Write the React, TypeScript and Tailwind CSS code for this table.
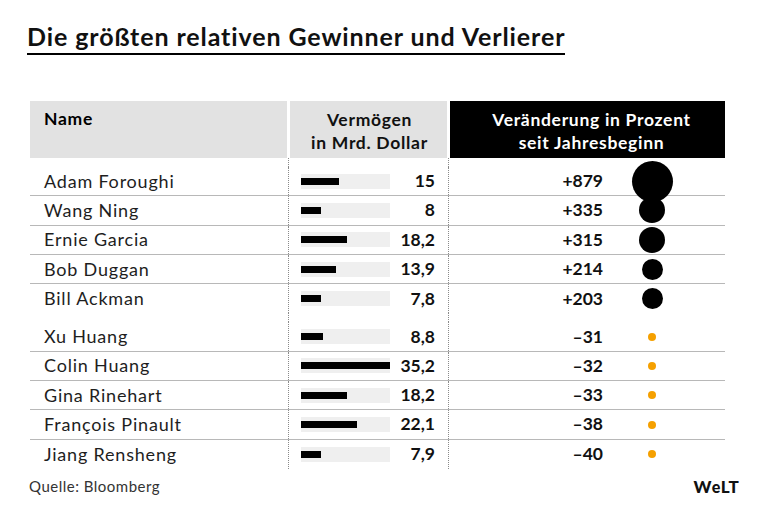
import React from "react";

type Row = { name: string; value: number; label: string; pct: string; d: number; win: boolean };

const winners: Row[] = [
  { name: "Adam Foroughi", value: 15, label: "15", pct: "+879", d: 41, win: true },
  { name: "Wang Ning", value: 8, label: "8", pct: "+335", d: 26, win: true },
  { name: "Ernie Garcia", value: 18.2, label: "18,2", pct: "+315", d: 26, win: true },
  { name: "Bob Duggan", value: 13.9, label: "13,9", pct: "+214", d: 21, win: true },
  { name: "Bill Ackman", value: 7.8, label: "7,8", pct: "+203", d: 21, win: true },
];

const losers: Row[] = [
  { name: "Xu Huang", value: 8.8, label: "8,8", pct: "–31", d: 8, win: false },
  { name: "Colin Huang", value: 35.2, label: "35,2", pct: "–32", d: 8, win: false },
  { name: "Gina Rinehart", value: 18.2, label: "18,2", pct: "–33", d: 8, win: false },
  { name: "François Pinault", value: 22.1, label: "22,1", pct: "–38", d: 8, win: false },
  { name: "Jiang Rensheng", value: 7.9, label: "7,9", pct: "–40", d: 8, win: false },
];

function DataRow({ r, last }: { r: Row; last: boolean }) {
  return (
    <div className={`flex h-[29.3px] ${last ? "" : "border-b-[1.5px] border-[#b8b8b8]"}`}>
      <div className="w-[258px] flex items-center pl-[14px] text-[18px] text-[#1e1e1e] tracking-[0.8px]">
        {r.name}
      </div>
      <div className="w-[161px] flex items-center border-x border-dotted border-[#8a8a8a] pl-[12px] pr-[13px]">
        <div className="w-[89px] h-[15px] bg-[#efefef] flex items-center">
          <div className="h-[7px] bg-black" style={{ width: `${(r.value / 35.2) * 89}px` }} />
        </div>
        <div className="flex-1 text-right text-[17.5px] font-bold text-[#111]">{r.label}</div>
      </div>
      <div className="flex items-center">
        <div className="w-[154px] text-right text-[17.5px] font-bold text-[#111]">{r.pct}</div>
        <div className="w-[98px] h-[29px] flex items-center justify-center">
          <div
            className={`shrink-0 rounded-full ${r.win ? "bg-black" : "bg-[#f5a000]"}`}
            style={{ width: `${r.d}px`, height: `${r.d}px` }}
          />
        </div>
      </div>
    </div>
  );
}

function Spacer({ h }: { h: string }) {
  return (
    <div className={`flex ${h}`}>
      <div className="w-[258px]" />
      <div className="w-[161px] border-x border-dotted border-[#8a8a8a]" />
    </div>
  );
}

export default function App() {
  return (
    <div className="w-[768px] h-[512px] bg-white overflow-hidden font-['Lato',sans-serif] text-black">
      <div className="pl-[27px] pt-[20px]">
        <div className="inline-block text-[25px] leading-[32px] font-bold tracking-[0.9px] border-b-[2.5px] border-black pb-[1px] text-[#111]">
          Die größten relativen Gewinner und Verlierer
        </div>
      </div>
      <div className="ml-[30px] w-[695px] mt-[46px]">
        <div className="flex h-[57px] text-[17.5px] font-bold leading-[23px] tracking-[0.7px]">
          <div className="w-[257px] bg-[#e2e2e2] pl-[14px] pt-[6px]">Name</div>
          <div className="w-[157px] ml-[3px] bg-[#e2e2e2] flex flex-col items-center pt-[7px] pl-[2px] text-[#111]">
            <span>Vermögen</span>
            <span>in Mrd. Dollar</span>
          </div>
          <div className="w-[275px] ml-[3px] bg-black text-white flex flex-col items-center pt-[7px] pl-[8px]">
            <span>Veränderung in Prozent</span>
            <span>seit Jahresbeginn</span>
          </div>
        </div>
        <Spacer h="h-[9px]" />
        {winners.map((r, i) => (
          <DataRow key={r.name} r={r} last={i === winners.length - 1} />
        ))}
        <Spacer h="h-[9px]" />
        {losers.map((r, i) => (
          <DataRow key={r.name} r={r} last={i === losers.length - 1} />
        ))}
      </div>
      <div className="flex items-center justify-between ml-[29px] mr-[29px] mt-[5px]">
        <span className="text-[15px] tracking-[0.5px] text-[#333]">Quelle: Bloomberg</span>
        <span className="text-[17px] font-black tracking-[0.3px] text-[#111]">
          W<span className="text-[16px]">e</span>LT
        </span>
      </div>
    </div>
  );
}
